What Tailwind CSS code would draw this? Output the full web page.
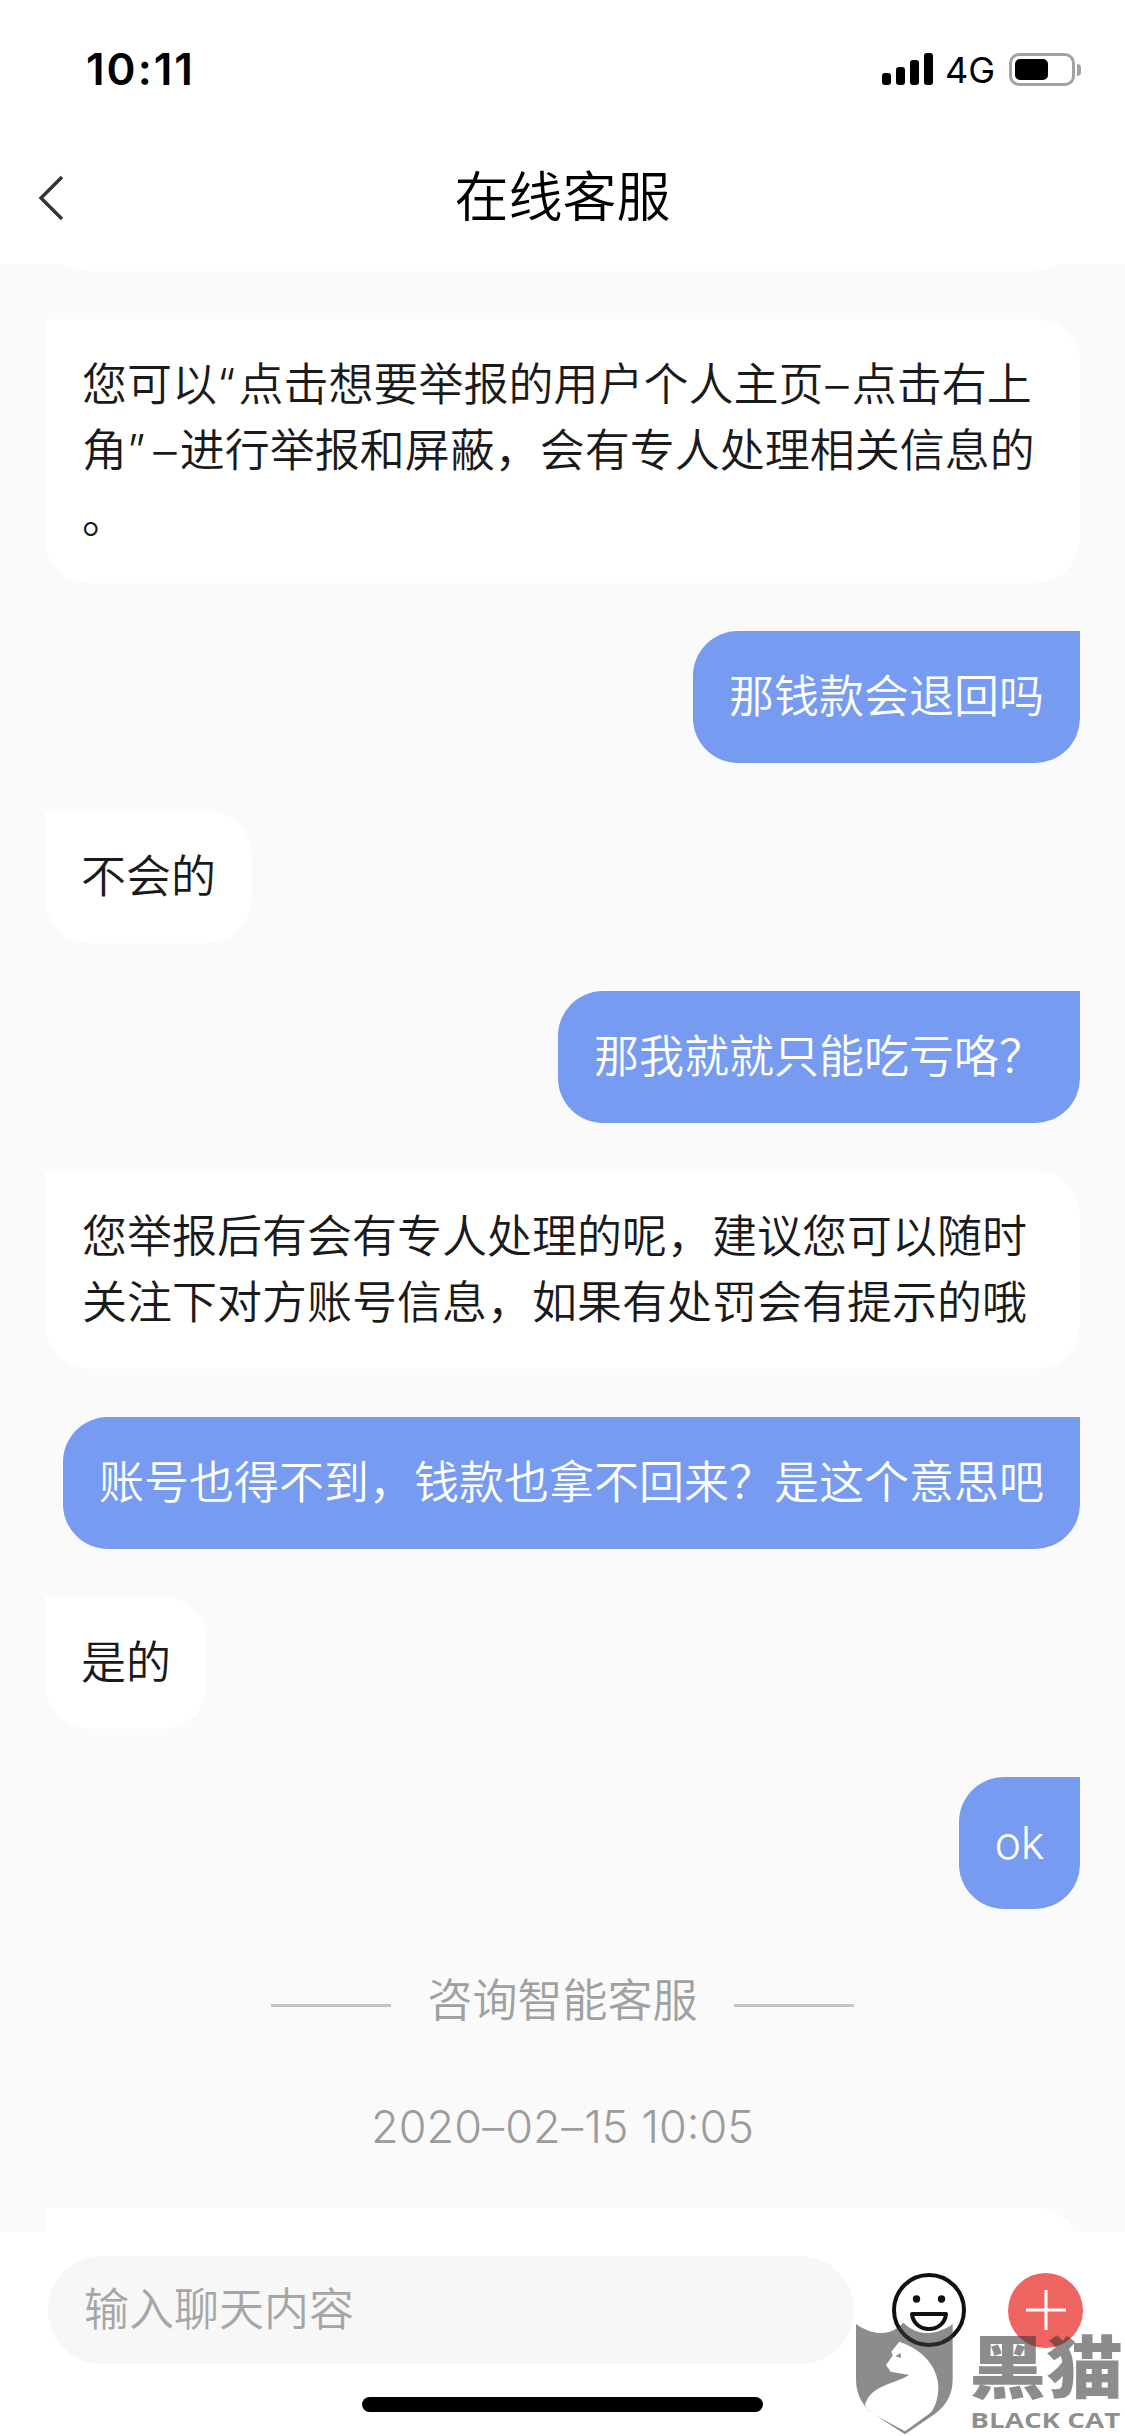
<!DOCTYPE html>
<html lang="zh-CN">
<head>
<meta charset="utf-8">
<title>在线客服</title>
<script src="https://cdn.jsdelivr.net/npm/@tailwindcss/browser@4"></script>
</head>
<body class="m-0">
<div class="relative flex flex-col w-[1125px] h-[2436px] overflow-hidden bg-[#fafafa] text-[#1a1a1a] font-['Inter','Noto_Sans_CJK_SC',sans-serif]">

  <header class="relative z-10 h-[264px] shrink-0 bg-white flex flex-col">
    <div class="h-[165px] shrink-0 flex items-start justify-between pt-[46px] pl-[86px] pr-[44px]">
      <span class="text-[44px] leading-[46px] font-semibold tracking-[2px] text-black">10:11</span>
      <div class="flex items-start pt-[7px]">
        <div class="flex items-end gap-[5px] h-[32px]">
          <span class="w-[9px] h-[12px] rounded-[3px] bg-black"></span>
          <span class="w-[9px] h-[18px] rounded-[3px] bg-black"></span>
          <span class="w-[9px] h-[25px] rounded-[3px] bg-black"></span>
          <span class="w-[9px] h-[32px] rounded-[3px] bg-black"></span>
        </div>
        <span class="ml-[12px] text-[36px] leading-[34px] text-black">4G</span>
        <div class="ml-[14px] flex items-center">
          <div class="w-[66px] h-[33px] rounded-[10px] border-[3px] border-[#a3a3a3] p-[3px]">
            <div class="w-[33px] h-full rounded-[5px] bg-black"></div>
          </div>
          <span class="ml-[2px] w-[4px] h-[12px] rounded-r-[4px] bg-[#a3a3a3]"></span>
        </div>
      </div>
    </div>
    <div class="grid grid-cols-[1fr_auto_1fr] items-center h-[66px]">
      <svg class="ml-[37px]" width="28" height="46" viewBox="0 0 28 46" fill="none" stroke="#333" stroke-width="3.4"><path d="M25 2 L4 23 L25 44"/></svg>
      <h1 class="text-[54px] leading-[66px] font-[350] text-black">在线客服</h1>
      <span></span>
    </div>
  </header>

  <main class="flex-1 min-h-0 overflow-hidden flex flex-col gap-[48px] px-[45px] text-[45px] leading-[66px] font-[350]">
    <div class="h-[100px] -mt-[93px] shrink-0 bg-white rounded-[45px]"></div>

    <div class="bg-white rounded-[45px] rounded-tl-none px-[37px] py-[33px] whitespace-nowrap">您可以<span class="pr-[3px]">“</span>点击想要举报的用户个人主页<span class="inline-block mx-[4px] scale-x-[1.7]">-</span>点击右上<br>角<span class="pr-[6px]">”</span><span class="inline-block mx-[4px] scale-x-[1.7]">-</span>进行举报和屏蔽，会有专人处理相关信息的<br>。</div>

    <div class="self-end bg-[#769bf1] text-white rounded-[45px] rounded-tr-none px-[36px] py-[33px] whitespace-nowrap">那钱款会退回吗</div>

    <div class="self-start bg-white rounded-[45px] rounded-tl-none px-[36px] py-[33px] whitespace-nowrap">不会的</div>

    <div class="self-end bg-[#769bf1] text-white rounded-[45px] rounded-tr-none px-[36px] py-[33px] whitespace-nowrap">那我就就只能吃亏咯？</div>

    <div class="bg-white rounded-[45px] rounded-tl-none px-[37px] py-[33px] whitespace-nowrap">您举报后有会有专人处理的呢，建议您可以随时<br>关注下对方账号信息，如果有处罚会有提示的哦</div>

    <div class="self-end bg-[#769bf1] text-white rounded-[45px] rounded-tr-none px-[36px] py-[33px] whitespace-nowrap">账号也得不到，钱款也拿不回来？是这个意思吧</div>

    <div class="self-start bg-white rounded-[45px] rounded-tl-none px-[36px] py-[33px] whitespace-nowrap">是的</div>

    <div class="self-end bg-[#769bf1] text-white rounded-[45px] rounded-tr-none px-[36px] py-[33px] whitespace-nowrap tracking-[-0.5px]">ok</div>

    <div class="mt-[11px] flex items-center justify-center gap-[36px] text-[#a0a0a0]">
      <span class="w-[120px] h-[3px] bg-[#c4c4c4] mt-[8px]"></span>
      <span>咨询智能客服</span>
      <span class="w-[120px] h-[3px] bg-[#c4c4c4] mt-[8px]"></span>
    </div>

    <div class="mt-[12px] text-center text-[#9c9c9c]">2020<span class="inline-block mx-[1.5px] scale-x-[1.6]">-</span>02<span class="inline-block mx-[1.5px] scale-x-[1.6]">-</span>15 10:05</div>

    <div class="h-[100px] shrink-0 bg-white rounded-[45px] rounded-tl-none"></div>
  </main>

  <footer class="shrink-0 bg-white h-[204px] pt-[24px] flex flex-col">
    <div class="flex items-center pl-[48px]">
      <div class="w-[806px] h-[108px] rounded-full bg-[#f7f7f7] pl-[36px] flex items-center text-[45px] font-[350] text-[#a6a6a6]">输入聊天内容</div>
      <svg class="ml-[38px]" width="74" height="74" viewBox="0 0 74 74" fill="none">
        <circle cx="37" cy="37" r="35" stroke="#111" stroke-width="4"/>
        <circle cx="24.500" cy="26" r="3.700" fill="#111"/>
        <circle cx="49.500" cy="26" r="3.700" fill="#111"/>
        <path d="M20 41 H54 C53 51 45 56 37 56 C29 56 21 51 20 41 Z" stroke="#111" stroke-width="4" stroke-linejoin="round"/>
      </svg>
      <div class="ml-[42px] w-[75px] h-[75px] rounded-full bg-[#ee6460] flex items-center justify-center">
        <svg width="40" height="40" viewBox="0 0 40 40" stroke="#fff" stroke-width="3"><path d="M0 20 H40 M20 0 V40"/></svg>
      </div>
    </div>
    <div class="mt-[33px] mx-auto w-[401px] h-[15px] rounded-full bg-black"></div>
  </footer>

  <!-- watermark -->
  <svg class="absolute left-[820px] top-[2240px] z-20 pointer-events-none" width="305" height="196" viewBox="0 0 915 588">
    <path fill="#3a3838" fill-opacity="0.58" fill-rule="evenodd" d="M108 252 C135 272 165 280 185 279 C210 278 232 268 250 248 C275 272 300 280 325 279 C350 278 378 268 398 252 L398 420 C398 470 370 505 340 525 L255 583 L165 525 C135 505 108 470 108 420 Z M238 305 L214 335 L218 347 L198 375 L212 395 L268 405 C232 428 175 432 145 472 L135 492 C140 510 155 518 170 528 L255 574 L330 520 C345 505 356 470 355 440 C354 395 325 335 238 305 Z"/>
    <path fill="#8f8e8e" d="M226 349 L242 339 L243 354 Z"/>
    <text x="448" y="458" font-size="205" font-weight="900" textLength="462" lengthAdjust="spacingAndGlyphs" fill="#3a3838" fill-opacity="0.58" font-family="'Noto Sans CJK SC',sans-serif">黑猫</text>
    <text x="451" y="565" font-size="66" font-weight="700" textLength="450" lengthAdjust="spacingAndGlyphs" fill="#3a3838" fill-opacity="0.58" font-family="'Open Sans',sans-serif">BLACK CAT</text>
  </svg>
</div>
</body>
</html>
